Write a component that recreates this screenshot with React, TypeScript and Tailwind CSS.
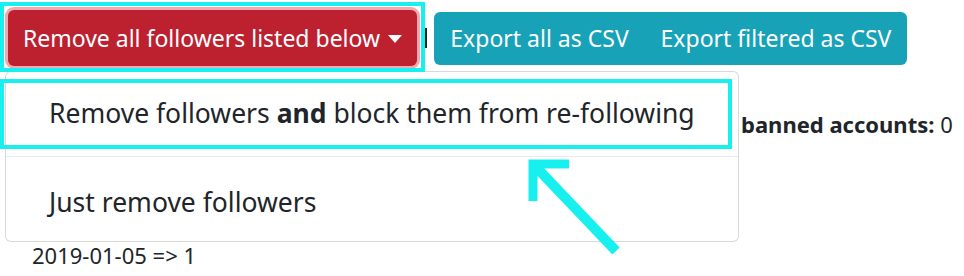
import React from "react";

export default function App() {
  return (
    <div
      className="relative w-[964px] h-[276px] overflow-hidden bg-white text-[#212529]"
      style={{ fontFamily: '"Noto Sans", "Open Sans", sans-serif' }}
    >
      {/* top button row */}
      <div className="flex items-start pl-[8px] pt-[10px]">
        <button className="flex h-[56px] w-[409px] items-center justify-center gap-[8px] whitespace-nowrap rounded-[6px] bg-[#bd2130] text-[23px] text-white shadow-[0_0_0_3px_rgba(225,83,97,0.5)]">
          <span>Remove all followers listed below</span>
          <span className="mt-[2px] h-0 w-0 border-x-[7px] border-t-[8px] border-x-transparent border-t-white" />
        </button>
        <span className="ml-[8px] mt-[18px] h-[20px] w-[2px] bg-[#222]" />
        <div className="ml-[7px] mt-[2px] flex h-[53px] whitespace-nowrap text-[23px] text-white">
          <button className="flex h-full w-[211px] items-center justify-center rounded-l-[6px] bg-[#17a2b8]">
            Export all as CSV
          </button>
          <button className="flex h-full w-[262px] items-center justify-center rounded-r-[6px] bg-[#17a2b8]">
            Export filtered as CSV
          </button>
        </div>
      </div>

      {/* counts line (partly hidden under the menu) */}
      <div className="mt-[42px] flex whitespace-nowrap text-[22px] leading-[33px]">
        <span className="w-[741px] pr-[6px] text-right">Total number of</span>
        <span>
          <b>banned accounts:</b> 0
        </span>
      </div>

      <div className="mt-[98px] whitespace-nowrap pl-[32px] text-[22px] leading-[33px]">2019-01-05 =&gt; 1</div>

      {/* dropdown menu */}
      <div className="absolute left-[5px] top-[71px] w-[734px] whitespace-nowrap rounded-[6px] border border-[rgba(0,0,0,0.15)] bg-white text-[26.5px] text-[#212529]">
        <div className="flex h-[84px] items-center pl-[43px]">
          <span>
            Remove followers <b>and</b> block them from re-following
          </span>
        </div>
        <div className="h-px bg-[#e9ecef]" />
        <div className="flex h-[84px] items-center pl-[43px] pt-[8px]">Just remove followers</div>
      </div>

      {/* annotation boxes */}
      <div className="absolute left-0 top-[2px] h-[70px] w-[425px] border-4 border-[#18f0f0]" />
      <div className="absolute left-0 top-[79px] h-[70px] w-[732px] border-4 border-[#18f0f0]" />

      {/* annotation arrow */}
      <svg className="absolute left-0 top-0" width="964" height="276" viewBox="0 0 964 276">
        <path d="M533 201 L533 164 L569 164" fill="none" stroke="#18f0f0" strokeWidth="9" strokeLinejoin="miter" />
        <path d="M535 166 L616 251" fill="none" stroke="#18f0f0" strokeWidth="10" />
      </svg>
    </div>
  );
}
